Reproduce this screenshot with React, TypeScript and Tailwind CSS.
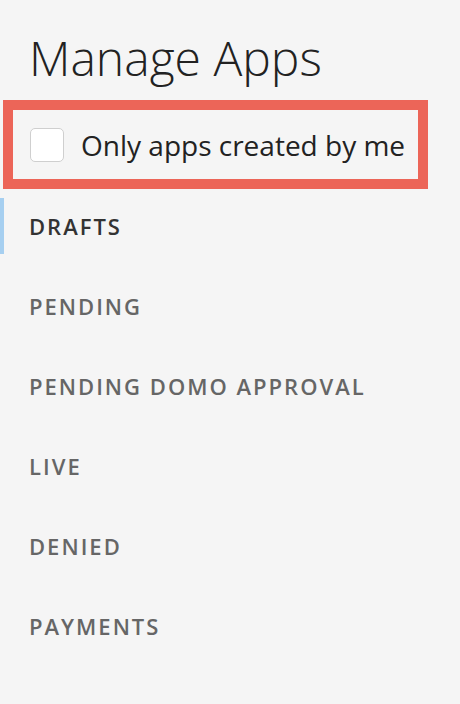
const items = [
  { label: "DRAFTS", active: true },
  { label: "PENDING" },
  { label: "PENDING DOMO APPROVAL" },
  { label: "LIVE" },
  { label: "DENIED" },
  { label: "PAYMENTS" },
];

const App = () => {
  return (
    <div className="min-h-[704px] w-[460px] bg-[#f5f5f5] font-['Open_Sans',sans-serif]">
      <h1 className="pl-[29px] pt-[28px] text-[48px] font-light leading-[60px] text-[#222]">
        Manage Apps
      </h1>

      {/* Highlighted filter */}
      <div className="mt-[12px] ml-[3px] flex h-[89px] w-[425px] items-center border-[10px] border-[#ec6558] pl-[17px]">
        <span className="h-[34px] w-[34px] rounded-[5px] border border-[#cfcfcf] bg-white" />
        <span className="ml-[17px] text-[28px] text-[#222]">Only apps created by me</span>
      </div>

      {/* Status nav */}
      <nav className="mt-[9px] flex flex-col gap-[24px]">
        {items.map((item) => (
          <div
            key={item.label}
            className={
              item.active
                ? "flex h-[56px] items-center border-l-4 border-[#a6cff0] pl-[25px] text-[22px] font-semibold tracking-[2px] text-[#333]"
                : "flex h-[56px] items-center border-l-4 border-transparent pl-[25px] text-[22px] font-semibold tracking-[2px] text-[#666]"
            }
          >
            {item.label}
          </div>
        ))}
      </nav>
    </div>
  );
};

export default App;
